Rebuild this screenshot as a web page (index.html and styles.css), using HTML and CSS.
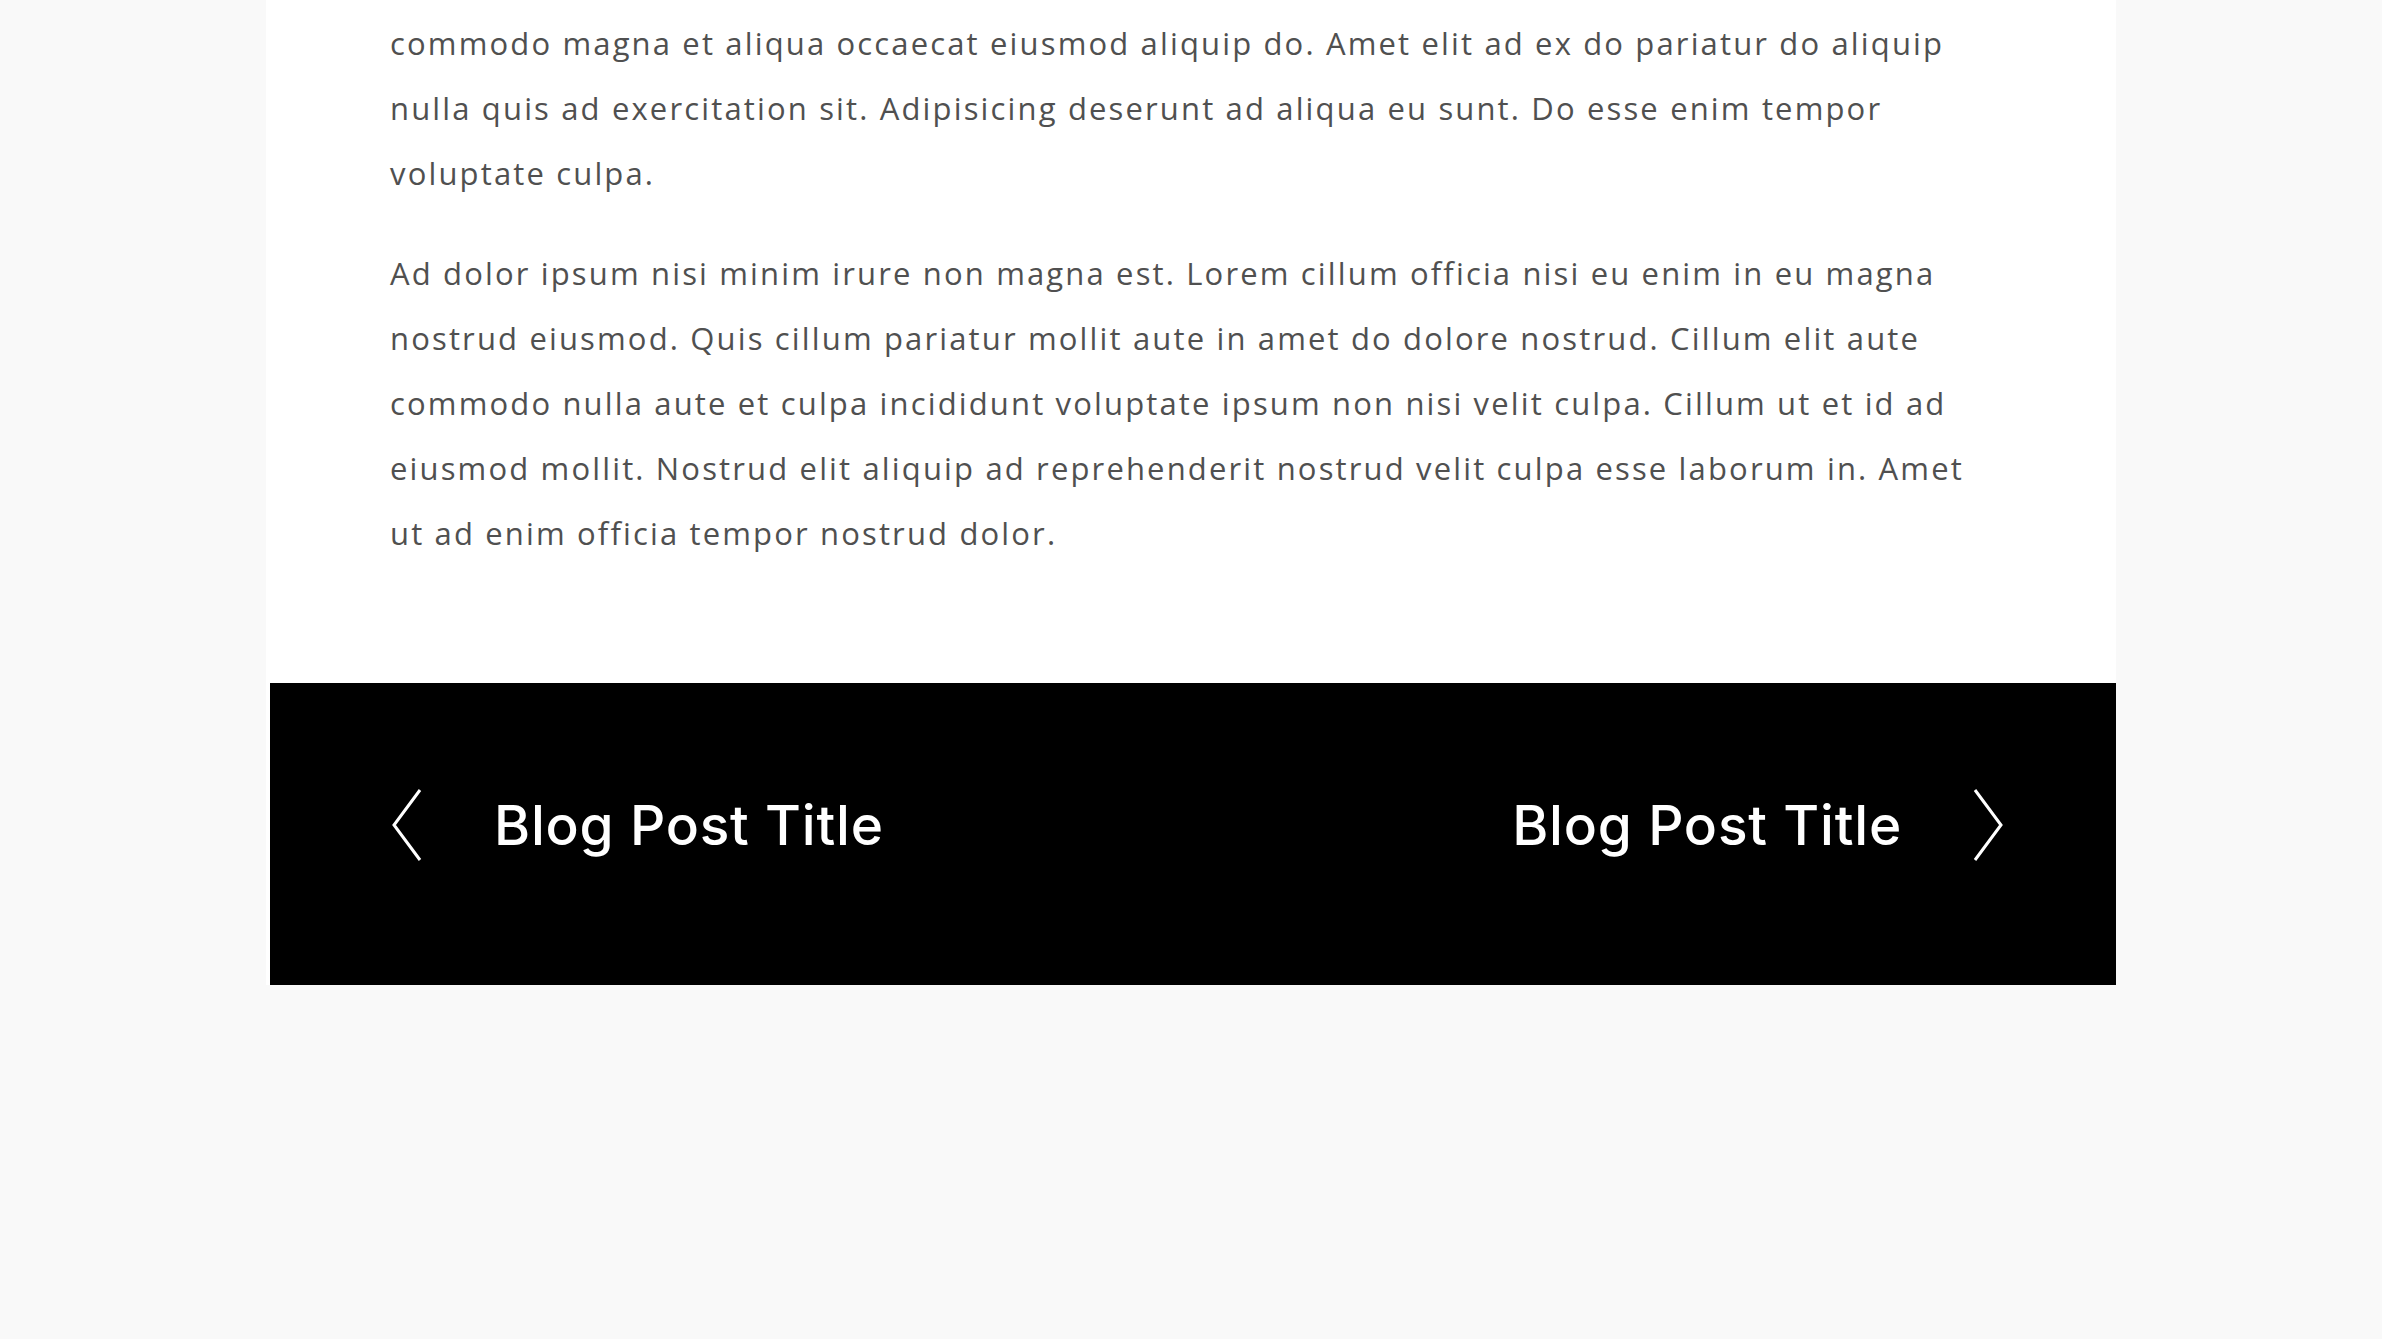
FILE: index.html
```html
<!DOCTYPE html>
<html lang="en">
<head>
    <meta charset="UTF-8">
    <meta name="viewport" content="width=device-width, initial-scale=1.0">
    <title>Blog Post</title>
    <link rel="stylesheet" href="styles.css">
</head>
<body>

<div class="post">
    <div class="post-body">
        <p>commodo magna et aliqua occaecat eiusmod aliquip do. Amet elit ad ex do pariatur do aliquip<br>
        nulla quis ad exercitation sit. Adipisicing deserunt ad aliqua eu sunt. Do esse enim tempor<br>
        voluptate culpa.</p>
        <p>Ad dolor ipsum nisi minim irure non magna est. Lorem cillum officia nisi eu enim in eu magna<br>
        nostrud eiusmod. Quis cillum pariatur mollit aute in amet do dolore nostrud. Cillum elit aute<br>
        commodo nulla aute et culpa incididunt voluptate ipsum non nisi velit culpa. Cillum ut et id ad<br>
        eiusmod mollit. Nostrud elit aliquip ad reprehenderit nostrud velit culpa esse laborum in. Amet<br>
        ut ad enim officia tempor nostrud dolor.</p>
    </div>

    <nav class="post-nav">
        <a class="nav-link prev" href="#">
            <svg class="chevron" width="30" height="74" viewBox="0 0 30 74">
                <polyline points="28,2 2,37 28,72" />
            </svg>
            <span class="nav-title">Blog Post Title</span>
        </a>
        <a class="nav-link next" href="#">
            <span class="nav-title">Blog Post Title</span>
            <svg class="chevron" width="30" height="74" viewBox="0 0 30 74">
                <polyline points="2,2 28,37 2,72" />
            </svg>
        </a>
    </nav>
</div>

</body>
</html>
```

FILE: styles.css
```css
body {
    margin: 0;
    background-color: #f9f9f9;
    font-family: "Open Sans", Arial, sans-serif;
    height: 100vh;
    overflow: hidden;
}

.post {
    width: 1850px;
    margin: 0 auto;
    background-color: #fff;
}

.post-body {
    padding: 11px 124px 82px 124px;
}

.post-body p {
    margin: 0 0 35px 0;
    font-size: 31px;
    line-height: 65px;
    color: #505050;
    letter-spacing: 2.15px;
    white-space: nowrap;
}

.post-nav {
    margin-left: 4px;
    background-color: #000;
    display: flex;
    justify-content: space-between;
    align-items: center;
    padding: 105px 113px 123px 122px;
}

.nav-link {
    display: flex;
    align-items: center;
    gap: 72px;
    color: #fff;
    text-decoration: none;
}

.nav-link.next {
    gap: 71px;
}

.chevron {
    display: block;
}

.chevron polyline {
    fill: none;
    stroke: #fff;
    stroke-width: 3;
}

.nav-title {
    font-family: Inter, "Open Sans", sans-serif;
    font-weight: 500;
    font-size: 55px;
    line-height: 66px;
    letter-spacing: 0.8px;
}
```
